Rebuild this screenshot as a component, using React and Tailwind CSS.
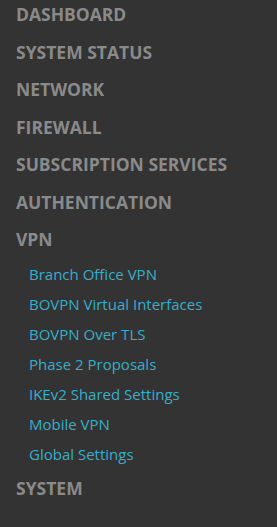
import React from "react";

const sections = [
  "DASHBOARD",
  "SYSTEM STATUS",
  "NETWORK",
  "FIREWALL",
  "SUBSCRIPTION SERVICES",
  "AUTHENTICATION",
];

const vpnLinks = [
  "Branch Office VPN",
  "BOVPN Virtual Interfaces",
  "BOVPN Over TLS",
  "Phase 2 Proposals",
  "IKEv2 Shared Settings",
  "Mobile VPN",
  "Global Settings",
];

const Header = ({ label }) => (
  <li className="pl-4 text-[17.5px] leading-[37.5px] font-bold text-[#8a8a8a]">
    {label}
  </li>
);

const App = () => {
  return (
    <div
      className="min-h-screen w-full bg-[#333333] overflow-hidden"
      style={{ fontFamily: '"Open Sans", sans-serif' }}
    >
      <ul className="-mt-[4px]">
        {sections.map((s) => (
          <Header key={s} label={s} />
        ))}
        <Header label="VPN" />
        <li>
          <ul className="pb-[1px]">
            {vpnLinks.map((l) => (
              <li
                key={l}
                className="pl-[29px] text-[15px] leading-[30px] text-[#36afcb]"
              >
                {l}
              </li>
            ))}
          </ul>
        </li>
        <Header label="SYSTEM" />
      </ul>
    </div>
  );
};

export default App;
